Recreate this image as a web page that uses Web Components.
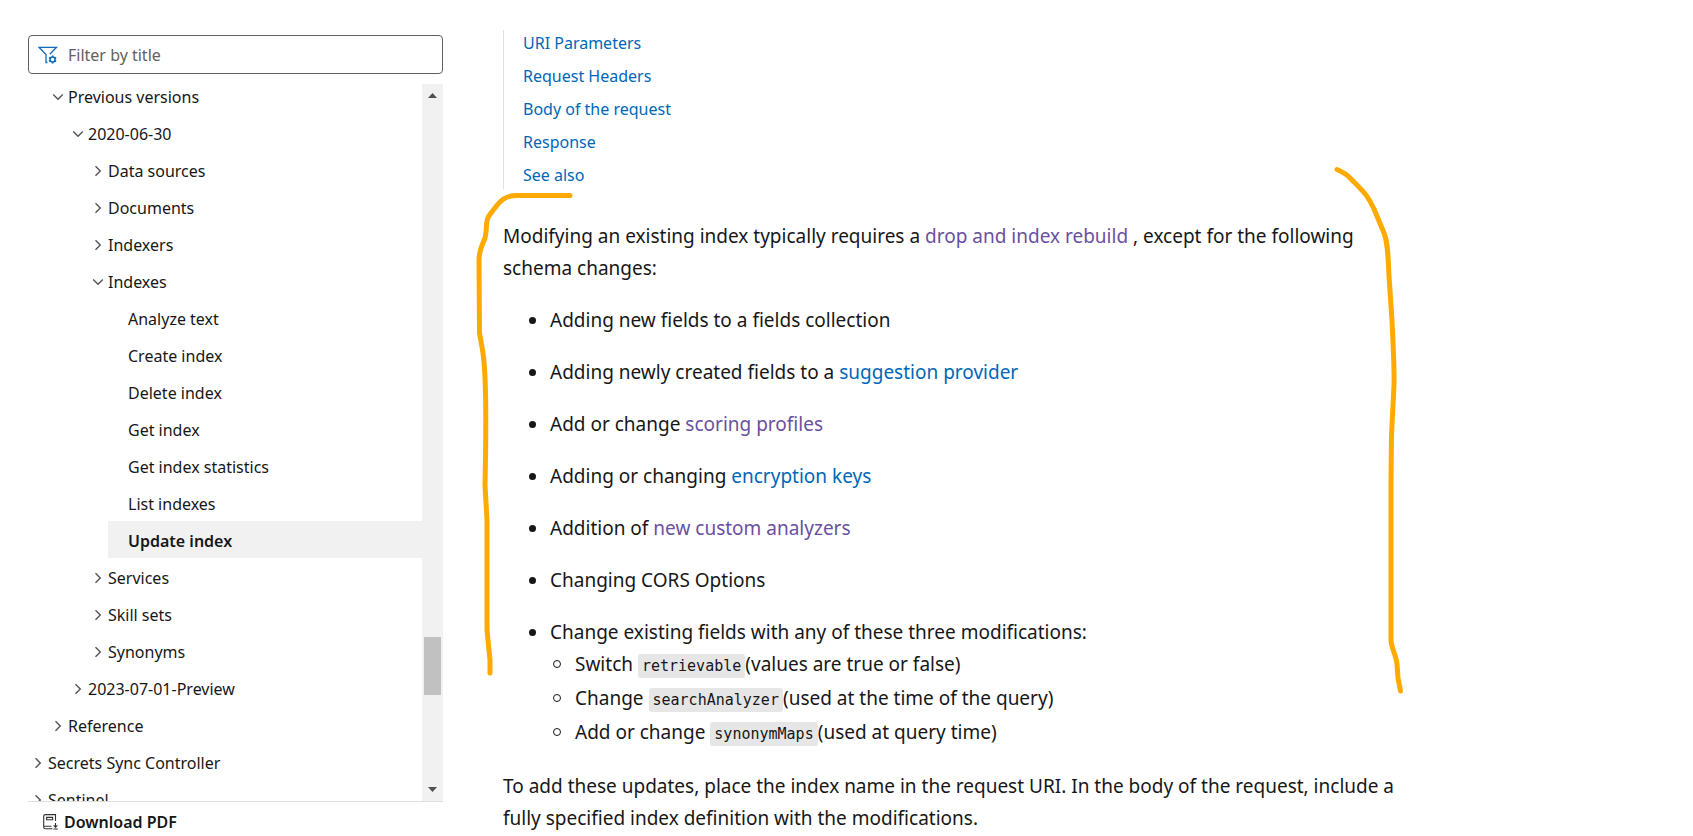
<!DOCTYPE html>
<html lang="en">
<head>
<meta charset="utf-8">
<title>Update index</title>
<style>
html, body { margin: 0; height: 100%; }
body { background: #fff; color: #171717; font-family: "Noto Sans", "Open Sans", sans-serif; font-size: 19px; overflow: hidden; }
</style>
</head>
<body>
<docs-page>
  <docs-sidebar slot="sidebar">
    <tree-group>
      <tree-item label="Previous versions" open>
        <tree-item label="2020-06-30" open>
          <tree-item label="Data sources" closed></tree-item>
          <tree-item label="Documents" closed></tree-item>
          <tree-item label="Indexers" closed></tree-item>
          <tree-item label="Indexes" open>
            <tree-item label="Analyze text"></tree-item>
            <tree-item label="Create index"></tree-item>
            <tree-item label="Delete index"></tree-item>
            <tree-item label="Get index"></tree-item>
            <tree-item label="Get index statistics"></tree-item>
            <tree-item label="List indexes"></tree-item>
            <tree-item label="Update index" current></tree-item>
          </tree-item>
          <tree-item label="Services" closed></tree-item>
          <tree-item label="Skill sets" closed></tree-item>
          <tree-item label="Synonyms" closed></tree-item>
        </tree-item>
        <tree-item label="2023-07-01-Preview" closed></tree-item>
      </tree-item>
      <tree-item label="Reference" closed></tree-item>
    </tree-group>
    <tree-item label="Secrets Sync Controller" closed></tree-item>
    <tree-item label="Sentinel" closed></tree-item>
  </docs-sidebar>
  <docs-article></docs-article>
</docs-page>
<ink-notes></ink-notes>

<script>
const define = (name, html, setup) => customElements.define(name, class extends HTMLElement {
  constructor() {
    super();
    const template = document.createElement('template');
    template.innerHTML = html;
    this.attachShadow({ mode: 'open' }).append(template.content.cloneNode(true));
  }
  connectedCallback() { if (setup) setup(this, this.shadowRoot); }
});

define('docs-page', `
<style>
:host { display: flex; gap: 60px; height: 100vh; padding: 0 28px; box-sizing: border-box; overflow: hidden; }
</style>
<slot name="sidebar"></slot><slot></slot>`);

define('filter-box', `
<style>
:host { display: block; }
label { display: flex; align-items: center; gap: 10px; height: 39px; box-sizing: border-box; padding: 0 9px; border: 1px solid #616161; border-radius: 4px; }
svg { flex: none; width: 20px; height: 20px; }
input { flex: 1; min-width: 0; border: 0; outline: 0; padding: 1px 0 0; background: none; color: #171717; font: inherit; font-size: 16px; }
input::placeholder { color: #616161; opacity: 1; }
</style>
<label>
  <svg viewBox="0 0 20 20" fill="none" stroke="#0f6cbd" stroke-width="1.3" aria-hidden="true">
    <path d="M9.5 17.5H8V9.6L1 2.3H18.6L11.8 9.2"/>
    <circle cx="14.6" cy="14.4" r="2.5" stroke-width="1.5"/>
    <path d="M14.6 10.4v1.5M14.6 16.9v1.5M11.1 12.4l1.3.8M16.8 15.6l1.3.8M11.1 16.4l1.3-.8M16.8 13.2l1.3-.8" stroke-width="1.8"/>
  </svg>
  <input type="text" placeholder="Filter by title" aria-label="Filter by title">
</label>`);

define('tree-group', `
<style>:host { display: block; padding-left: 20px; }</style>
<slot></slot>`);

define('tree-item', `
<style>
:host { display: block; }
.row { display: flex; align-items: center; width: 100%; height: 37px; box-sizing: border-box; padding: 2px 0 0; border: 0; background: none; color: #171717; font: inherit; font-size: 16px; line-height: 24px; text-align: left; text-decoration: none; white-space: nowrap; }
svg { width: 12px; height: 12px; margin: 0 4px; flex: none; }
a.row { padding-left: 20px; }
:host([open]) path { transform: rotate(90deg); transform-origin: 6px 6px; }
:host([current]) .row { background: #f1f1f1; font-weight: 600; }
.children { padding-left: 20px; }
</style>
<slot name="row"></slot><div class="children"><slot></slot></div>`, (host, root) => {
  const branch = host.hasAttribute('open') || host.hasAttribute('closed');
  const row = document.createElement(branch ? 'button' : 'a');
  row.className = 'row';
  if (branch) {
    row.type = 'button';
    row.setAttribute('aria-expanded', host.hasAttribute('open'));
    row.innerHTML = '<svg viewBox="0 0 12 12" fill="none" stroke="#555" stroke-width="1.4" aria-hidden="true"><path d="M3.5 1.2L8.300 6L3.500 10.800"/></svg>';
  } else {
    row.href = '#';
    if (host.hasAttribute('current')) row.setAttribute('aria-current', 'page');
  }
  row.append(host.getAttribute('label'));
  root.querySelector('slot[name=row]').replaceWith(row);
});

define('scroll-track', `
<style>
:host { display: grid; grid-template-rows: 23px 530fr 58px 83fr 23px; justify-items: center; align-items: center; width: 21px; background: #f1f1f1; }
.thumb { grid-row: 3; width: 17px; height: 58px; background: #c1c1c1; }
svg { width: 9px; height: 5px; fill: #505050; }
.down { grid-row: 5; }
</style>
<svg viewBox="0 0 9 5"><path d="M4.5 0L9 5H0Z"/></svg><div class="thumb"></div><svg class="down" viewBox="0 0 9 5"><path d="M0 0H9L4.5 5Z"/></svg>`);

define('docs-sidebar', `
<style>
:host { display: flex; flex-direction: column; flex: 0 0 415px; padding-top: 35px; box-sizing: border-box; height: 100vh; }
.scroller { flex: 1; min-height: 0; display: flex; margin-top: 10px; overflow: hidden; }
nav { flex: 1; min-width: 0; margin-top: -7px; }
footer { flex: none; display: flex; align-items: center; height: 28px; padding: 6px 15px 0; border-top: 1px solid #e0e0e0; }
a { display: flex; align-items: center; gap: 6px; color: #171717; text-decoration: none; font-size: 16px; line-height: 24px; font-weight: 600; }
svg { width: 15px; height: 16px; }
</style>
<filter-box></filter-box>
<div class="scroller"><nav aria-label="Table of contents"><slot></slot></nav><scroll-track></scroll-track></div>
<footer><a href="#"><svg viewBox="0 0 15 16" fill="none" stroke="#333" stroke-width="1.1" aria-hidden="true">
<path d="M12.5 7V.6H2.3Q.7.6.7 2.2V13.2Q.7 14.8 2.3 14.8H9.4M.8 12.2H8.4M3.6 3.4H9.6V5.8H3.6ZM12.5 9V13M10.6 11.4L12.5 13.2L14.4 11.400M10.4 15H14.8"/></svg>Download PDF</a></footer>`);

define('jump-links', `
<style>
:host { display: flow-root; border-left: 1px solid #e0e0e0; padding-left: 19px; }
ul { list-style: none; margin: -3px 0; padding: 0; }
li { font-size: 16px; line-height: 33px; }
a { color: #0067b8; text-decoration: none; }
</style>
<ul><li><a href="#">URI Parameters</a></li><li><a href="#">Request Headers</a></li><li><a href="#">Body of the request</a></li><li><a href="#">Response</a></li><li><a href="#">See also</a></li></ul>`);

define('docs-article', `
<style>
:host { display: block; flex: 0 1 900px; min-width: 0; padding-top: 30px; box-sizing: border-box; line-height: 32px; }
p { margin: 0; }
jump-links { margin-bottom: 31px; }
a { color: #0067b8; text-decoration: none; }
a.seen { color: #6b4fa0; }
ul { list-style: none; margin: 20px 0; padding: 0 0 0 47px; }
li { position: relative; margin-bottom: 20px; }
li::before { content: ""; position: absolute; left: -21px; top: 13px; width: 7px; height: 7px; border-radius: 50%; background: #171717; }
li ul { margin: -1px 0 21px; padding-left: 25px; }
li li { margin: 0; line-height: 34px; }
li li::before { width: 6px; height: 6px; background: none; border: 1px solid #171717; left: -22px; }
code { font-family: "DejaVu Sans Mono", monospace; font-size: 15px; line-height: 20px; background: #e6e6e6; border-radius: 3px; padding: 3px 4px; }
</style>
<jump-links></jump-links>
<p>Modifying an existing index typically requires a <a class="seen" href="#">drop and index rebuild</a> , except for the following schema changes:</p>
<ul>
<li>Adding new fields to a fields collection</li>
<li>Adding newly created fields to a <a href="#">suggestion provider</a></li>
<li>Add or change <a class="seen" href="#">scoring profiles</a></li>
<li>Adding or changing <a href="#">encryption keys</a></li>
<li>Addition of <a class="seen" href="#">new custom analyzers</a></li>
<li>Changing CORS Options</li>
<li>Change existing fields with any of these three modifications:
<ul><li>Switch <code>retrievable</code>(values are true or false)</li><li>Change <code>searchAnalyzer</code>(used at the time of the query)</li><li>Add or change <code>synonymMaps</code>(used at query time)</li></ul></li>
</ul>
<p>To add these updates, place the index name in the request URI. In the body of the request, include a fully specified index definition with the modifications.</p>`);

define('ink-notes', `
<style>
:host { position: absolute; left: 476px; top: 164px; width: 930px; height: 534px; pointer-events: none; }
svg { display: block; width: 930px; height: 534px; }
</style>
<svg viewBox="476 164 930 534" fill="none" stroke="#ffaa00" stroke-width="5" stroke-linecap="round" stroke-linejoin="round" aria-hidden="true">
<path d="M570 195.5H516C508 195.5 503 198 498 204L491 213C484 221 488 228 485 238C482 246 479 250 479 260L479.500 333C481 342 483 350 484 362C487 395 486 440 485 485L487 520V630L490 660V673"/>
<path d="M1337 169.500C1348 174 1350 178 1354 182C1366 194 1369 198 1374 209L1384 233C1388 243 1388 256 1389 276L1392 320C1393 345 1394.500 365 1394 385L1391.500 435L1391 480V640C1391 648 1396 654 1397 664L1398 678L1400.500 691"/>
</svg>`);
</script>
</body>
</html>
